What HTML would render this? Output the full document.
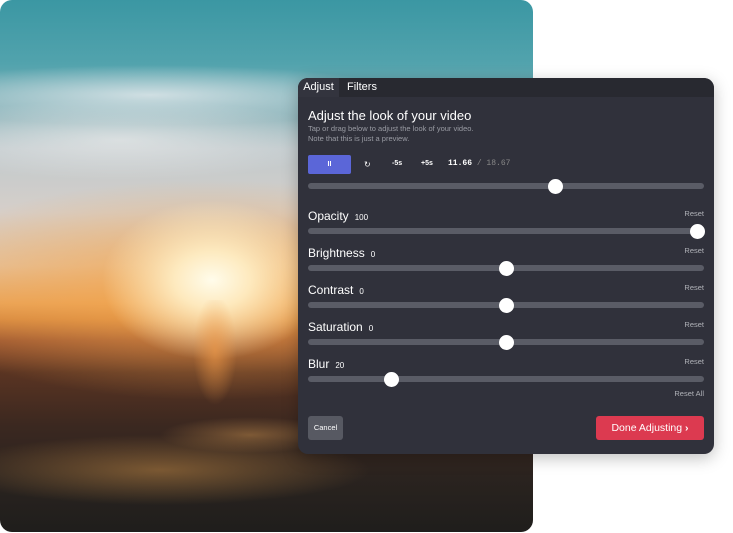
<!DOCTYPE html>
<html><head><style>
body{margin:0;width:733px;height:533px;background:#fff;position:relative;overflow:hidden;font-family:"Liberation Sans",sans-serif}
.img{position:absolute;left:0;top:0;width:533px;height:532px;border-radius:12px;overflow:hidden;
background:
radial-gradient(ellipse 110px 80px at 212px 280px,rgba(255,252,235,1) 0%,rgba(255,240,200,.9) 35%,rgba(255,200,120,0) 100%),
radial-gradient(ellipse 320px 110px at 210px 290px,rgba(245,165,75,.8),rgba(240,150,60,0) 100%),
radial-gradient(ellipse 260px 30px at 150px 95px,rgba(230,235,238,.8),rgba(230,235,238,0)),
radial-gradient(ellipse 220px 40px at 120px 140px,rgba(235,235,235,.7),rgba(230,235,238,0)),
linear-gradient(180deg,#3b97a3 0%,#52a3ad 12%,#82b0b7 20%,#c0c9cc 28%,#d6cfca 40%,#e4c3a0 50%,#e8a45a 57%,#d48840 60%,#9a5530 64%,#5a3422 70%,#3b2820 80%,#2a231f 90%,#1f1e1c 100%)}
.shaft{position:absolute;left:190px;top:300px;width:50px;height:110px;background:radial-gradient(ellipse 22px 55px at 25px 50px,rgba(235,150,70,.7),rgba(0,0,0,0))}
.glow{position:absolute;left:0;top:410px;width:533px;height:110px;background:radial-gradient(ellipse 210px 35px at 160px 60px,rgba(200,140,70,.5),rgba(0,0,0,0)),radial-gradient(ellipse 90px 18px at 250px 25px,rgba(210,150,80,.45),rgba(0,0,0,0))}
.panel{position:absolute;left:298px;top:78px;width:416px;height:376px;background:#30313b;border-radius:10px;overflow:hidden;box-shadow:0 4px 16px rgba(0,0,0,.25);color:#fff}
.tabs{height:19px;background:#282930;position:relative}
.tab{position:absolute;top:0;height:19px;line-height:19px;font-size:11px}
.t{position:absolute;left:10px;color:#fff}
.track{position:absolute;left:10px;width:396px;height:6px;border-radius:3px;background:#5a5c66}
.knob{position:absolute;width:15px;height:15px;border-radius:50%;background:#fff;margin-left:-7.5px;margin-top:-7.5px}
.lab{position:absolute;left:10px;font-size:12px}
.lab span{font-size:8px;margin-left:6px}
.reset{position:absolute;right:10px;font-size:7.5px;color:#b0b2b8}
</style></head><body>
<div class="img"><div class="shaft"></div><div class="glow"></div></div>
<div class="panel">
<div class="tabs"><div class="tab" style="left:0;width:41px;background:#33343e;text-align:center">Adjust</div><div class="tab" style="left:49px">Filters</div></div>
<div class="t" style="top:30px;font-size:13px">Adjust the look of your video</div>
<div class="t" style="top:46px;font-size:7.5px;color:#9a9ca4;line-height:10px">Tap or drag below to adjust the look of your video.<br>Note that this is just a preview.</div>
<div style="position:absolute;left:10px;top:77px;width:43px;height:19px;background:#5b66d8;border-radius:2px;font-size:7px;text-align:center;line-height:19px;font-weight:bold">II</div>
<div style="position:absolute;left:66px;top:82px;font-size:8px">↻</div>
<div style="position:absolute;left:94px;top:82px;font-size:7px;font-weight:bold">-5s</div>
<div style="position:absolute;left:123px;top:82px;font-size:7px;font-weight:bold">+5s</div>
<div style="position:absolute;left:150px;top:81px;font-size:8px;font-family:'Liberation Mono',monospace;font-weight:bold">11.66 <span style="color:#888;font-weight:normal">/ 18.67</span></div>
<div class="track" style="top:105px"><div class="knob" style="left:247px;top:3px"></div></div>
<div class="lab" style="top:131px">Opacity<span>100</span></div><div class="reset" style="top:131px">Reset</div>
<div class="track" style="top:150px"><div class="knob" style="left:389px;top:3px"></div></div>
<div class="lab" style="top:168px">Brightness<span>0</span></div><div class="reset" style="top:168px">Reset</div>
<div class="track" style="top:187px"><div class="knob" style="left:198px;top:3px"></div></div>
<div class="lab" style="top:205px">Contrast<span>0</span></div><div class="reset" style="top:205px">Reset</div>
<div class="track" style="top:224px"><div class="knob" style="left:198px;top:3px"></div></div>
<div class="lab" style="top:242px">Saturation<span>0</span></div><div class="reset" style="top:242px">Reset</div>
<div class="track" style="top:261px"><div class="knob" style="left:198px;top:3px"></div></div>
<div class="lab" style="top:279px">Blur<span>20</span></div><div class="reset" style="top:279px">Reset</div>
<div class="track" style="top:298px"><div class="knob" style="left:83px;top:3px"></div></div>
<div class="reset" style="top:311px">Reset All</div>
<div style="position:absolute;left:10px;top:338px;width:35px;height:24px;background:#575962;border-radius:3px;font-size:7.5px;text-align:center;line-height:24px">Cancel</div>
<div style="position:absolute;left:298px;top:338px;width:108px;height:24px;background:#dc3a50;border-radius:3px;font-size:10.5px;text-align:center;line-height:24px">Done Adjusting <b>›</b></div>
</div>
</body></html>
